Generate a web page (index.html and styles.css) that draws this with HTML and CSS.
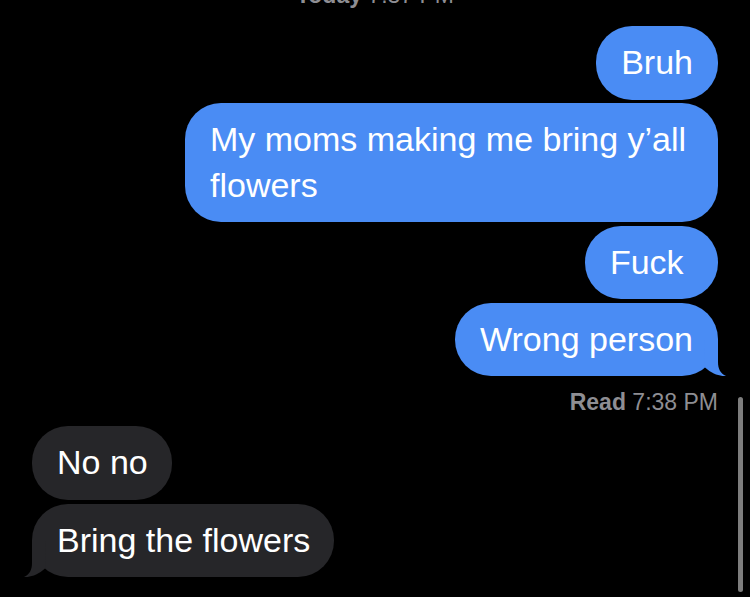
FILE: index.html
```html
<!DOCTYPE html>
<html lang="en">
<head>
<meta charset="utf-8">
<title>Messages</title>
<link rel="stylesheet" href="styles.css">
</head>
<body>
<div class="screen">
  <div class="thread">
    <div class="stamp"><b>Today</b> 7:37 PM</div>
    <div class="bubble sent">Bruh</div>
    <div class="bubble sent wide">My moms making me bring y’all flowers</div>
    <div class="bubble sent">Fuck&nbsp;</div>
    <div class="bubble sent tailed">Wrong person
      <svg class="tail tail-right" width="24" height="36" viewBox="0 0 24 36"><path d="M0 0 L14 0 L14 22 C14 29 16.5 33.5 22 36 C16 36.6 8 34 1 27.6 Z"/></svg>
    </div>
    <div class="receipt"><b>Read</b> 7:38 PM</div>
    <div class="bubble recv">No no</div>
    <div class="bubble recv tailed">Bring the flowers
      <svg class="tail tail-left" width="24" height="36" viewBox="0 0 24 36"><path d="M24 0 L10 0 L10 22 C10 29 7.5 33.5 2 36 C8 36.6 16 34 23 27.6 Z"/></svg>
    </div>
  </div>
  <div class="scrollbar"></div>
</div>
</body>
</html>
```

FILE: styles.css
```css
html, body {
  margin: 0;
  padding: 0;
  background: #000;
}

.screen {
  position: relative;
  width: 750px;
  height: 597px;
  overflow: hidden;
  background: #000;
  font-family: "Liberation Sans", Arial, sans-serif;
}

.thread {
  display: flex;
  flex-direction: column;
  padding: 0 32px;
}

.stamp {
  margin-top: -19px;
  margin-bottom: 17px;
  text-align: center;
  font-size: 23px;
  line-height: 28px;
  color: #8e8e93;
}

.stamp b,
.receipt b {
  font-weight: 700;
}

.bubble {
  position: relative;
  box-sizing: border-box;
  max-width: 533px;
  padding: 14px 25px;
  border-radius: 36px;
  font-size: 34px;
  line-height: 45.5px;
  color: #fff;
}

.sent {
  align-self: flex-end;
  background: #4a8cf4;
  margin-top: 3.5px;
}

.stamp + .sent {
  margin-top: 0;
}

.wide {
  width: 533px;
}

.recv {
  align-self: flex-start;
  background: #262629;
  margin-top: 4px;
  padding-right: 24px;
}

.receipt + .recv {
  margin-top: 10px;
}

.receipt {
  margin-top: 12px;
  text-align: right;
  font-size: 23px;
  line-height: 28px;
  color: #8e8e93;
}

.tail {
  position: absolute;
  bottom: 0;
}

.tail-right {
  right: -10px;
  fill: #4a8cf4;
}

.tail-left {
  left: -10px;
  fill: #262629;
}

.scrollbar {
  position: absolute;
  left: 738px;
  top: 397px;
  width: 5px;
  height: 195px;
  border-radius: 3px;
  background: #7d7d7d;
}
```
